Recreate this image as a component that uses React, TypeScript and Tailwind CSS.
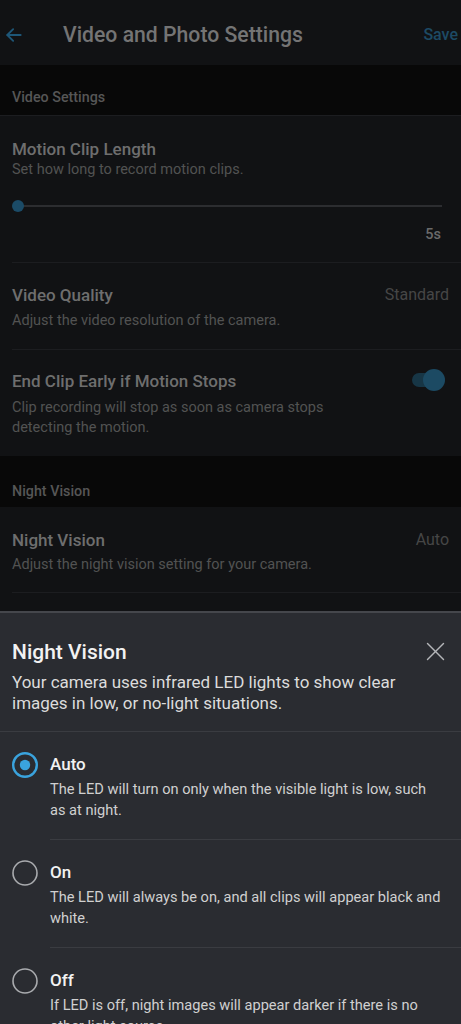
import React from "react";

function Divider() {
  return <div className="h-px bg-[#1c1d20] ml-3" />;
}

function Radio({ checked }: { checked: boolean }) {
  return (
    <svg width="28" height="28" viewBox="0 0 28 28" className="shrink-0">
      {checked ? (
        <>
          <circle cx="14" cy="14" r="11.8" fill="none" stroke="#3aa3dd" strokeWidth="2.4" />
          <circle cx="14" cy="14" r="5.2" fill="#3aa3dd" />
        </>
      ) : (
        <circle cx="14" cy="14" r="12" fill="none" stroke="#a9abae" strokeWidth="1.6" />
      )}
    </svg>
  );
}

function Option({ title, desc, checked, last }: { title: string; desc: string; checked: boolean; last?: boolean }) {
  return (
    <div>
      <div className="flex pt-[21px] pb-[18px]">
        <div className="w-[50px] flex pl-[11px]">
          <div className="mt-[-2px]">
            <Radio checked={checked} />
          </div>
        </div>
        <div className="flex-1 pr-[18px]">
          <div className="text-[17px] leading-[22px] font-medium text-[#f2f2f2]">{title}</div>
          <div className="mt-[4px] text-[14.6px] leading-[21px] text-[#d0d0d0]">{desc}</div>
        </div>
      </div>
      {!last && <div className="h-px bg-[#3a3c41] ml-[50px]" />}
    </div>
  );
}

export default function App() {
  return (
    <div className="relative w-[461px] h-[1024px] overflow-hidden bg-[#111214] font-['Roboto',sans-serif]">
      {/* Header */}
      <div className="h-[65px] pt-[5px] flex items-center">
        <div className="w-[63px] pl-[4px] flex items-center">
          <svg width="20" height="20" viewBox="0 0 24 24" fill="none" stroke="#1e5778" strokeWidth="2.2" strokeLinecap="round" strokeLinejoin="round">
            <path d="M20 12H4" />
            <path d="M11 5l-7 7 7 7" />
          </svg>
        </div>
        <div className="flex-1 text-[21.2px] leading-[24px] font-medium text-[#747474]">Video and Photo Settings</div>
        <div className="pr-[3px] text-[16px] font-medium text-[#1d4a64]">Save</div>
      </div>

      {/* Section: Video Settings */}
      <div className="h-[50px] bg-[#080808] pt-[22px] pl-3 text-[14.3px] leading-[20px] font-medium text-[#565656]">Video Settings</div>
      <div className="h-px bg-[#1c1d20]" />

      {/* Motion Clip Length */}
      <div className="pt-[22px] pb-[17px] pl-3">
        <div className="text-[17px] leading-[22px] font-medium text-[#6e6e6e]">Motion Clip Length</div>
        <div className="text-[14.5px] leading-[20px] text-[#525252]">Set how long to record motion clips.</div>
        <div className="relative mt-[20px] h-[12px] flex items-center pr-[19px]">
          <div className="flex-1 h-[2px] bg-[#2c2d30] ml-[6px]" />
          <div className="absolute left-0 top-0 w-[12px] h-[12px] rounded-full bg-[#1b4b67]" />
        </div>
        <div className="mt-[13px] pr-[20px] text-right text-[14.5px] leading-[20px] font-medium text-[#6a6a6a]">5s</div>
      </div>
      <Divider />

      {/* Video Quality */}
      <div className="pt-[21px] pb-[18px] pl-3 pr-3">
        <div className="flex items-center justify-between">
          <div className="text-[17px] leading-[22px] font-medium text-[#6e6e6e]">Video Quality</div>
          <div className="text-[16px] leading-[22px] text-[#464646]">Standard</div>
        </div>
        <div className="mt-[5px] text-[14.5px] leading-[20px] text-[#525252]">Adjust the video resolution of the camera.</div>
      </div>
      <Divider />

      {/* End Clip Early */}
      <div className="pt-[20px] pb-[18px] pl-3 pr-4 flex">
        <div className="flex-1">
          <div className="text-[17px] leading-[22px] font-medium text-[#6e6e6e]">End Clip Early if Motion Stops</div>
          <div className="mt-[6px] max-w-[330px] text-[14.5px] leading-[20px] text-[#525252]">
            Clip recording will stop as soon as camera stops detecting the motion.
          </div>
        </div>
        <div className="relative w-[33px] h-[22px] mt-[-1px]">
          <div className="absolute left-0 top-[4px] w-[30px] h-[14px] rounded-full bg-[#173646]" />
          <div className="absolute right-0 top-0 w-[22px] h-[22px] rounded-full bg-[#1c4a63]" />
        </div>
      </div>

      {/* Section: Night Vision */}
      <div className="h-[51px] bg-[#080808] pt-[25px] pl-3 text-[14.3px] leading-[20px] font-medium text-[#565656]">Night Vision</div>

      {/* Night Vision row */}
      <div className="pt-[22px] pb-[17px] pl-3 pr-3">
        <div className="flex items-center justify-between">
          <div className="text-[17px] leading-[22px] font-medium text-[#6e6e6e]">Night Vision</div>
          <div className="text-[16px] leading-[22px] text-[#464646]">Auto</div>
        </div>
        <div className="mt-[4px] text-[14.5px] leading-[20px] text-[#525252]">Adjust the night vision setting for your camera.</div>
      </div>
      <Divider />

      {/* Bottom sheet */}
      <div className="absolute left-0 right-0 top-[611px] bottom-0 bg-[#2a2c31] border-t-2 border-[#45474c]">
        <div className="pl-3 pr-[31px] pt-[27px] pb-[17px] relative">
          <div className="text-[21px] leading-[24px] font-medium text-[#f2f2f2]">Night Vision</div>
          <div className="mt-[8px] text-[17px] leading-[21px] text-[#dcdcdc]">
            Your camera uses infrared LED lights to show clear images in low, or no-light situations.
          </div>
          <button className="absolute right-[16px] top-[29px] w-[19px] h-[19px]">
            <svg width="19" height="19" viewBox="0 0 19 19" fill="none" stroke="#b4b6b9" strokeWidth="1.4" strokeLinecap="round">
              <path d="M1.5 1.5l16 16" />
              <path d="M17.5 1.5l-16 16" />
            </svg>
          </button>
        </div>
        <div className="h-px bg-[#3a3c41]" />
        <Option checked title="Auto" desc="The LED will turn on only when the visible light is low, such as at night." />
        <Option checked={false} title="On" desc="The LED will always be on, and all clips will appear black and white." />
        <Option checked={false} title="Off" desc="If LED is off, night images will appear darker if there is no other light source." last />
      </div>
    </div>
  );
}
